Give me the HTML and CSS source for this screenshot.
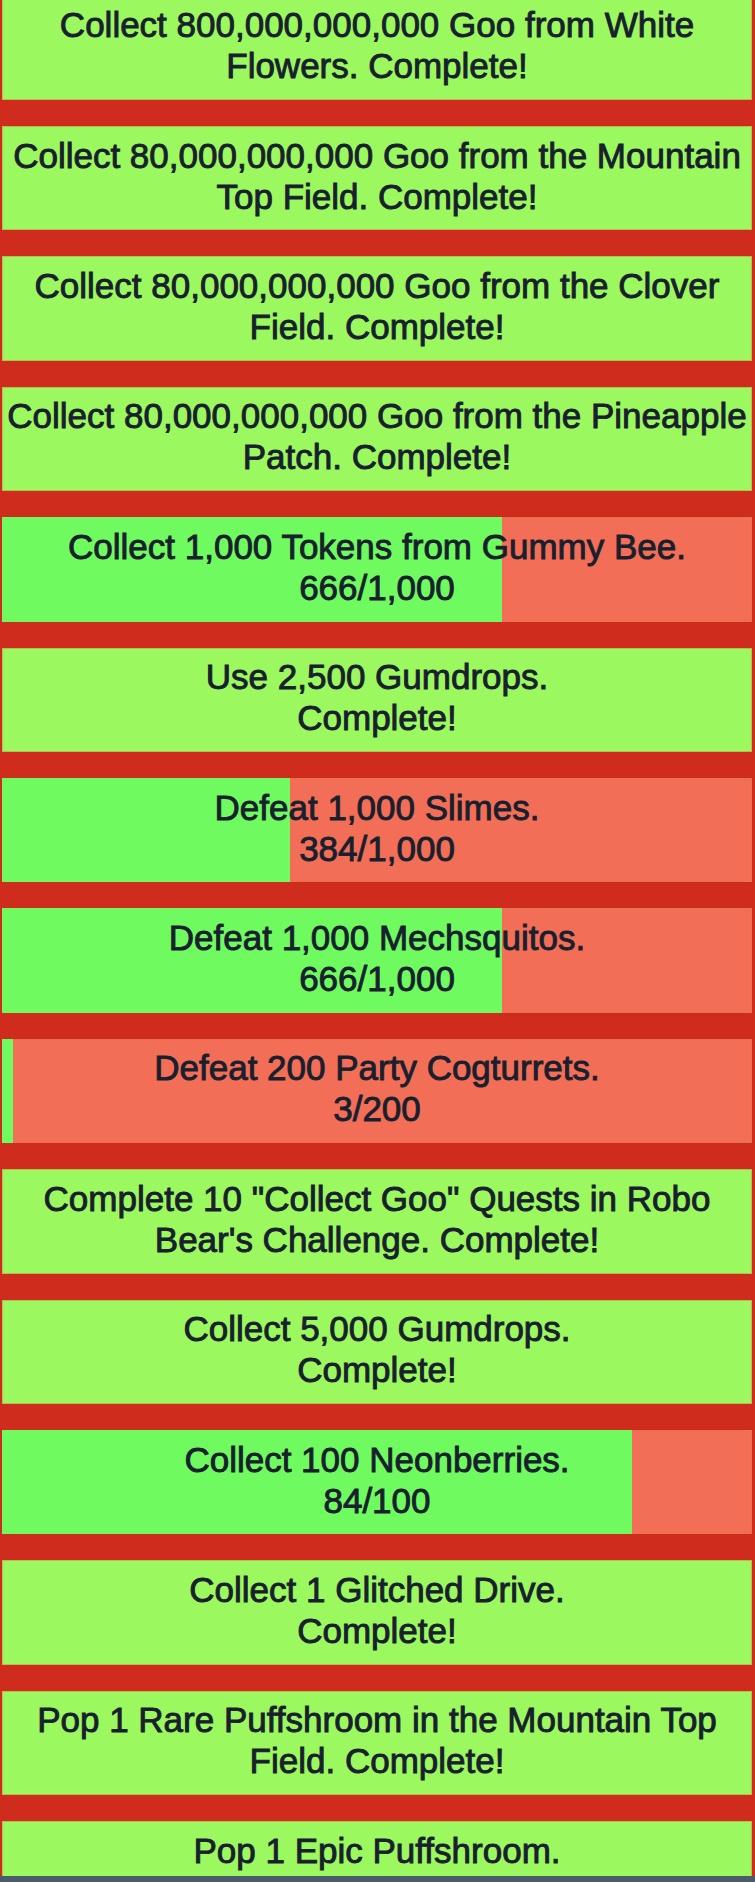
FILE: index.html
```html
<!DOCTYPE html>
<html lang="en">
<head>
<meta charset="utf-8">
<title>Quests</title>
<link rel="stylesheet" href="styles.css">
</head>
<body>
<div class="frame">
  <div class="list">
    <div class="quest done"><p class="label">Collect 800,000,000,000 Goo from White<br>Flowers. Complete!</p></div>
    <div class="quest done"><p class="label">Collect 80,000,000,000 Goo from the Mountain<br>Top Field. Complete!</p></div>
    <div class="quest done"><p class="label">Collect 80,000,000,000 Goo from the Clover<br>Field. Complete!</p></div>
    <div class="quest done"><p class="label">Collect 80,000,000,000 Goo from the Pineapple<br>Patch. Complete!</p></div>
    <div class="quest progress"><div class="fill" style="width:66.6%"></div><p class="label">Collect 1,000 Tokens from Gummy Bee.<br>666/1,000</p></div>
    <div class="quest done"><p class="label">Use 2,500 Gumdrops.<br>Complete!</p></div>
    <div class="quest progress"><div class="fill" style="width:38.4%"></div><p class="label">Defeat 1,000 Slimes.<br>384/1,000</p></div>
    <div class="quest progress"><div class="fill" style="width:66.6%"></div><p class="label">Defeat 1,000 Mechsquitos.<br>666/1,000</p></div>
    <div class="quest progress"><div class="fill" style="width:1.5%"></div><p class="label">Defeat 200 Party Cogturrets.<br>3/200</p></div>
    <div class="quest done"><p class="label">Complete 10 "Collect Goo" Quests in Robo<br>Bear's Challenge. Complete!</p></div>
    <div class="quest done"><p class="label">Collect 5,000 Gumdrops.<br>Complete!</p></div>
    <div class="quest progress"><div class="fill" style="width:84%"></div><p class="label">Collect 100 Neonberries.<br>84/100</p></div>
    <div class="quest done"><p class="label">Collect 1 Glitched Drive.<br>Complete!</p></div>
    <div class="quest done"><p class="label">Pop 1 Rare Puffshroom in the Mountain Top<br>Field. Complete!</p></div>
    <div class="quest done"><p class="label clipped">Pop 1 Epic Puffshroom.</p></div>
  </div>
</div>
</body>
</html>
```

FILE: styles.css
```css
html, body {
  margin: 0;
  padding: 0;
}

body {
  background: #4b5b6c;
  font-family: "Liberation Sans", Arial, sans-serif;
}

.frame {
  height: 1876px;
  overflow: hidden;
  background: #cf2c1e;
  padding: 0 3px 0 2px;
}

.list {
  margin-top: -4.4px;
  display: flex;
  flex-direction: column;
  gap: 26px;
}

.quest {
  position: relative;
  height: 104.4px;
  flex: none;
  display: flex;
  align-items: center;
  justify-content: center;
  overflow: hidden;
  padding-bottom: 5px;
  box-sizing: border-box;
  box-shadow: inset 0 0 0 1px rgba(214, 120, 60, 0.45);
}

.quest.done {
  background: #9bf85f;
}

.quest.progress {
  background: #f26e56;
}

.fill {
  position: absolute;
  top: 0;
  bottom: 0;
  left: 0;
  background: #6ffb5f;
}

.label {
  position: relative;
  margin: 0;
  font-size: 35px;
  line-height: 41px;
  text-align: center;
  white-space: nowrap;
  color: #18202e;
  -webkit-text-stroke: 0.9px #18202e;
}

.label.clipped {
  padding-bottom: 41px;
}
```
